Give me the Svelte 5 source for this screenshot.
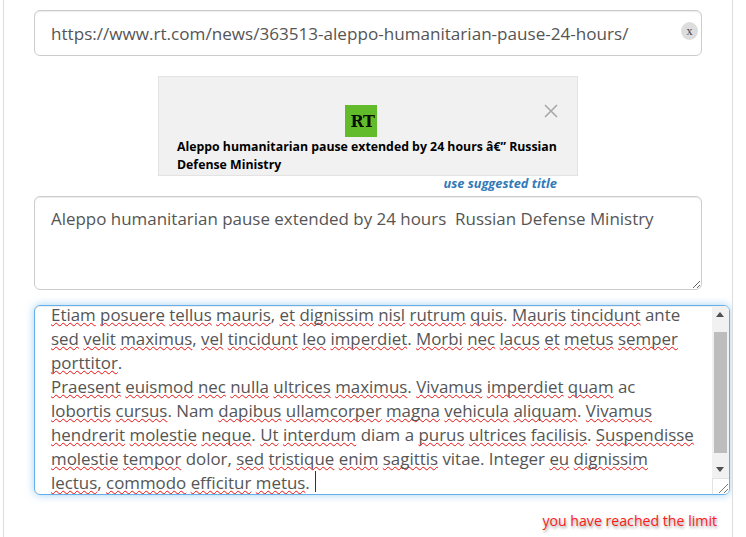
<script lang="ts">
	let url = $state('https://www.rt.com/news/363513-aleppo-humanitarian-pause-24-hours/');
	let title = $state('Aleppo humanitarian pause extended by 24 hours  Russian Defense Ministry');
	let showCard = $state(true);

	// each line of the body; words in `ok` get no spell-check underline
	const bodyLines = [
		{ text: 'Etiam posuere tellus mauris, et dignissim nisl rutrum quis. Mauris tincidunt ante', ok: ['ante'] },
		{ text: 'sed velit maximus, vel tincidunt leo imperdiet. Morbi nec lacus et metus semper', ok: [] },
		{ text: 'porttitor.', ok: [] },
		{ text: 'Praesent euismod nec nulla ultrices maximus. Vivamus imperdiet quam ac', ok: ['ac'] },
		{ text: 'lobortis cursus. Nam dapibus ullamcorper magna vehicula aliquam. Vivamus', ok: ['Nam'] },
		{ text: 'hendrerit molestie neque. Ut interdum diam a purus ultrices facilisis. Suspendisse', ok: ['diam', 'a'] },
		{ text: 'molestie tempor dolor, sed tristique enim sagittis vitae. Integer eu dignissim', ok: ['dolor', 'vitae', 'Integer'] },
		{ text: 'lectus, commodo efficitur metus.', ok: [] }
	];

	function split(word: string) {
		const m = word.match(/^(.*?)([.,]?)$/);
		return { base: m ? m[1] : word, tail: m ? m[2] : '' };
	}
</script>

<div class="panel">
	<div class="url-row">
		<input class="field field-url" type="text" bind:value={url} />
		<button class="clear" onclick={() => (url = '')}>x</button>
	</div>

	{#if showCard}
		<div class="card">
			<button class="card-close" aria-label="Close" onclick={() => (showCard = false)}>
				<svg width="14" height="14" viewBox="0 0 14 14">
					<path d="M1 1 13 13M13 1 1 13" stroke="#a6a6a6" stroke-width="1.5" fill="none" />
				</svg>
			</button>
			<div class="logo"><span>RT</span></div>
			<div class="card-title">Aleppo humanitarian pause extended by 24 hours â€” Russian Defense Ministry</div>
		</div>
		<div class="suggest"><a href="#top">use suggested title</a></div>
	{/if}

	<textarea class="field field-title" bind:value={title}></textarea>

	<div class="body-box">
		<div class="body-text">
			{#each bodyLines as line, i}
				<div class="line">
					{#each line.text.split(' ') as word, j}
						{@const w = split(word)}
						{#if j > 0}{' '}{/if}{#if line.ok.includes(w.base)}{word}{:else}<span class="typo">{w.base}</span>{w.tail}{/if}
					{/each}{#if i === bodyLines.length - 1}<span class="caret"></span>{/if}
				</div>
			{/each}
		</div>
		<div class="scrollbar">
			<div class="arrow up"></div>
			<div class="track"><div class="thumb"></div></div>
			<div class="arrow down"></div>
			<div class="grip">
				<svg width="12" height="12" viewBox="0 0 12 12">
					<path d="M2 11 11 2M7 11 11 7" stroke="#777" stroke-width="1" fill="none" />
				</svg>
			</div>
		</div>
	</div>

	<div class="limit">you have reached the limit</div>
</div>

<style>
	:global(body) {
		margin: 0;
		background: #fff;
	}

	.panel {
		box-sizing: border-box;
		width: 730px;
		height: 537px;
		margin-left: 3px;
		padding: 10px 30px 0;
		border-left: 1px solid #ddd;
		border-right: 1px solid #ddd;
		overflow: hidden;
		font-family: 'Open Sans', 'Noto Sans', sans-serif;
		color: #555;
	}

	.field {
		display: block;
		box-sizing: border-box;
		width: 100%;
		padding: 10px 16px;
		border: 1px solid #ccc;
		border-radius: 6px;
		background: #fff;
		color: #555;
		font-family: inherit;
		line-height: 24px;
		outline: none;
		box-shadow: inset 0 1px 1px rgba(0, 0, 0, 0.075);
	}

	.url-row {
		position: relative;
	}

	.field-url {
		height: 46px;
		font-size: 17.1px;
	}

	.clear {
		position: absolute;
		top: 12px;
		right: 4px;
		width: 17px;
		height: 18px;
		padding: 0;
		border: none;
		border-radius: 50%;
		background: #ddd;
		color: #444;
		font-family: 'Liberation Serif', serif;
		font-size: 12px;
		line-height: 16px;
	}

	.card {
		position: relative;
		box-sizing: border-box;
		width: 420px;
		height: 100px;
		margin: 20px auto 0;
		padding-top: 28px;
		border: 1px solid #e3e3e3;
		background: #f1f1f1;
		overflow: hidden;
	}

	.card-close {
		position: absolute;
		top: 27px;
		right: 19px;
		width: 14px;
		height: 14px;
		padding: 0;
		border: none;
		background: none;
		line-height: 0;
	}

	.logo {
		display: flex;
		align-items: center;
		justify-content: center;
		width: 32px;
		height: 32px;
		margin-left: 186px;
		background: #62bb2a;
		overflow: hidden;
	}

	.logo span {
		padding-left: 3px;
		color: #061002;
		font-family: 'DejaVu Serif', serif;
		font-size: 16px;
		font-weight: bold;
		letter-spacing: -0.5px;
		filter: blur(0.5px);
	}

	.card-title {
		padding: 1px 10px 0 18px;
		color: #000;
		font-size: 12.3px;
		font-weight: 700;
		line-height: 18px;
	}

	.suggest {
		width: 420px;
		height: 20px;
		margin: 0 auto;
		padding-right: 21px;
		box-sizing: border-box;
		text-align: right;
		font-size: 12.8px;
		line-height: 14px;
	}

	.suggest a {
		color: #337ab7;
		font-style: italic;
		font-weight: 700;
		text-decoration: none;
	}

	.field-title {
		height: 94px;
		resize: vertical;
		font-size: 16.95px;
	}

	.body-box {
		display: flex;
		box-sizing: border-box;
		width: 696px;
		height: 190px;
		margin-top: 15px;
		border: 1px solid #66afe9;
		border-radius: 6px;
		box-shadow:
			inset 0 1px 1px rgba(0, 0, 0, 0.075),
			0 0 8px rgba(102, 175, 233, 0.6);
		overflow: hidden;
	}

	.body-text {
		flex: 1;
		min-width: 0;
		padding: 0 0 0 16px;
		margin-top: -3px;
		font-size: 16.9px;
		line-height: 24px;
		white-space: nowrap;
	}

	.typo {
		text-decoration: underline wavy #e81010 1px;
		text-underline-offset: 1px;
		text-decoration-skip-ink: none;
	}

	.caret {
		display: inline-block;
		width: 1px;
		height: 21px;
		margin-left: 5px;
		background: #333;
		vertical-align: -3px;
	}

	.scrollbar {
		display: flex;
		flex-direction: column;
		width: 17px;
		background: #f1f1f1;
	}

	.arrow {
		position: relative;
		height: 17px;
		flex: none;
	}

	.arrow::after {
		content: '';
		position: absolute;
		left: 4px;
		top: 6px;
		border-left: 4px solid transparent;
		border-right: 4px solid transparent;
	}

	.arrow.up::after {
		border-bottom: 5px solid #505050;
	}

	.arrow.down::after {
		border-top: 5px solid #505050;
	}

	.track {
		flex: 1;
		padding: 9px 2px 0;
	}

	.thumb {
		height: 121px;
		background: #bdbdbd;
	}

	.grip {
		display: flex;
		align-items: flex-end;
		justify-content: flex-end;
		box-sizing: border-box;
		height: 16px;
		flex: none;
		border-top: 1px solid #e3e3e3;
		border-left: 1px solid #e3e3e3;
		background: #fff;
	}

	.limit {
		width: 683px;
		margin-top: 17px;
		text-align: right;
		color: #ff1a1a;
		font-size: 14.15px;
		line-height: 18px;
		text-shadow: 1px 2px 3px rgba(0, 0, 0, 0.4);
	}
</style>
